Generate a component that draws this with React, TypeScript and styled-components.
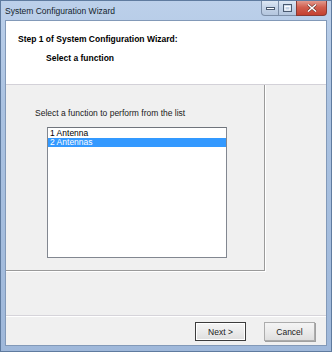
import React from "react";
import styled, { createGlobalStyle } from "styled-components";

const GlobalStyle = createGlobalStyle`
  html, body {
    margin: 0;
    padding: 0;
    width: 332px;
    height: 352px;
    overflow: hidden;
    background: #ffffff;
  }
  * {
    box-sizing: border-box;
  }
`;

const WindowFrame = styled.div`
  width: 332px;
  height: 352px;
  display: flex;
  flex-direction: column;
  background: linear-gradient(180deg, #bcd0ea 0%, #aac2e1 30%, #9fb8da 100%);
  border: 1px solid #5f7b9f;
  font-family: "Liberation Sans", Arial, sans-serif;
`;

const TitleBar = styled.div`
  height: 19px;
  display: flex;
  align-items: flex-start;
  justify-content: space-between;
  padding-left: 4px;
`;

const TitleText = styled.span`
  font-size: 8.5px;
  color: #141e2c;
  margin-top: 5px;
`;

const CaptionButtons = styled.div`
  display: flex;
  margin-right: 4px;
`;

const CaptionButton = styled.div<{ $close?: boolean; $w: number }>`
  width: ${(p) => p.$w}px;
  height: 15px;
  display: flex;
  align-items: center;
  justify-content: center;
  border: 1px solid ${(p) => (p.$close ? "#8a3a33" : "#7c8ea7")};
  border-top: none;
  margin-left: -1px;
  background: ${(p) =>
    p.$close
      ? "linear-gradient(180deg, #e29a8e 0%, #d15e4e 45%, #c4402f 100%)"
      : "linear-gradient(180deg, #dde7f3 0%, #c5d4e8 45%, #b4c6de 100%)"};
  border-radius: ${(p) => (p.$close ? "0 0 4px 0" : "0")};
  &:first-child {
    border-radius: 0 0 0 4px;
  }
`;

const ClientArea = styled.div`
  flex: 1;
  margin: 0 4px 5px 4px;
  display: flex;
  flex-direction: column;
  background: #f0f0f0;
  border: 1px solid #8299b8;
`;

const Header = styled.div`
  height: 64px;
  background: #ffffff;
  border-bottom: 1px solid #d3d1d8;
  padding: 13px 0 0 12px;
  display: flex;
  flex-direction: column;
  gap: 9px;
`;

const HeaderTitle = styled.div<{ $indent?: number }>`
  font-size: 8.5px;
  font-weight: bold;
  color: #000000;
  padding-left: ${(p) => p.$indent ?? 0}px;
`;

const Body = styled.div`
  flex: 1;
  display: flex;
  flex-direction: column;
`;

const Panel = styled.div`
  width: 260px;
  height: 187px;
  border-right: 1px solid #ffffff;
  border-bottom: 1px solid #ffffff;
  box-shadow: inset -1px -1px 0 #9a9a9a;
  padding: 23px 0 0 29px;
  display: flex;
  flex-direction: column;
`;

const Prompt = styled.div`
  font-size: 8.5px;
  color: #1a1a1a;
`;

const ListBox = styled.div`
  width: 180px;
  height: 131px;
  margin: 9px 0 0 12px;
  background: #ffffff;
  border: 1px solid #828790;
  border-top-color: #6f747c;
  padding: 1px 0 0 0;
`;

const ListItem = styled.div<{ $selected?: boolean }>`
  height: 9px;
  line-height: 9px;
  font-size: 8.5px;
  padding-left: 2px;
  color: ${(p) => (p.$selected ? "#ffffff" : "#000000")};
  background: ${(p) => (p.$selected ? "#3399ff" : "transparent")};
`;

const Footer = styled.div`
  margin-top: auto;
  height: 30px;
  border-top: 1px solid #d6d4da;
  box-shadow: inset 0 1px 0 #ffffff;
  display: flex;
  justify-content: flex-end;
  align-items: flex-start;
  padding: 6px 11px 0 0;
  gap: 18px;
`;

const Button = styled.button<{ $default?: boolean }>`
  width: 51px;
  height: 19px;
  padding: 0;
  font-family: "Liberation Sans", Arial, sans-serif;
  font-size: 8.5px;
  color: #1a1a1a;
  background: linear-gradient(180deg, #f4f4f4 0%, #ebebeb 50%, #dedede 100%);
  border: 1px solid ${(p) => (p.$default ? "#3c3c3c" : "#acacac")};
  box-shadow: ${(p) =>
    p.$default ? "inset 0 0 0 1px #ffffff" : "1px 1px 0 #a0a0a0"};
  border-radius: 0;
`;

const MinIcon = () => (
  <svg width="9" height="6" viewBox="0 0 9 6">
    <rect x="0.5" y="2.5" width="8" height="2" fill="#ffffff" stroke="#4a5a70" strokeWidth="1" />
  </svg>
);

const MaxIcon = () => (
  <svg width="9" height="8" viewBox="0 0 9 8">
    <rect x="0.5" y="0.5" width="8" height="7" fill="none" stroke="#4a5a70" strokeWidth="1" />
    <rect x="2" y="2.5" width="5" height="3.5" fill="none" stroke="#ffffff" strokeWidth="1" />
  </svg>
);

const CloseIcon = () => (
  <svg width="10" height="8" viewBox="0 0 10 8">
    <path d="M1 0.5 L9 7.5 M9 0.5 L1 7.5" stroke="#5a2620" strokeWidth="2.6" />
    <path d="M1 0.5 L9 7.5 M9 0.5 L1 7.5" stroke="#ffffff" strokeWidth="1.6" />
  </svg>
);

export default function App() {
  return (
    <>
      <GlobalStyle />
      <WindowFrame>
        <TitleBar>
          <TitleText>System Configuration Wizard</TitleText>
          <CaptionButtons>
            <CaptionButton $w={18}>
              <MinIcon />
            </CaptionButton>
            <CaptionButton $w={19}>
              <MaxIcon />
            </CaptionButton>
            <CaptionButton $w={31} $close>
              <CloseIcon />
            </CaptionButton>
          </CaptionButtons>
        </TitleBar>
        <ClientArea>
          <Header>
            <HeaderTitle>Step 1 of System Configuration Wizard:</HeaderTitle>
            <HeaderTitle $indent={28}>Select a function</HeaderTitle>
          </Header>
          <Body>
            <Panel>
              <Prompt>Select a function to perform from the list</Prompt>
              <ListBox>
                <ListItem>1 Antenna</ListItem>
                <ListItem $selected>2 Antennas</ListItem>
              </ListBox>
            </Panel>
            <Footer>
              <Button $default>Next &gt;</Button>
              <Button>Cancel</Button>
            </Footer>
          </Body>
        </ClientArea>
      </WindowFrame>
    </>
  );
}
